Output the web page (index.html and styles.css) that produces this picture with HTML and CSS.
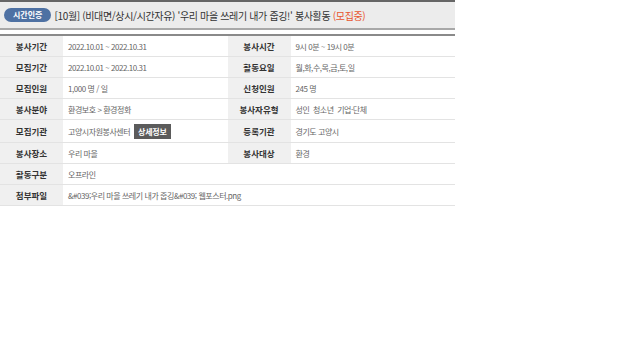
FILE: index.html
```html
<!DOCTYPE html>
<html lang="ko">
<head>
    <meta charset="UTF-8">
    <meta name="viewport" content="width=device-width, initial-scale=1.0">
    <title>봉사활동 상세</title>
    <link rel="stylesheet" href="styles.css">
</head>
<body>
    <div class="view">
        <div class="view-title">
            <span class="badge">시간인증</span>
            <h2>[10월] (비대면/상시/시간자유) '우리 마을 쓰레기 내가 줍깅!' 봉사활동 <em>(모집중)</em></h2>
        </div>

        <table class="info">
            <colgroup>
                <col class="col-th">
                <col class="col-td">
                <col class="col-th">
                <col class="col-td">
            </colgroup>
            <tr>
                <th>봉사기간</th>
                <td>2022.10.01 ~ 2022.10.31</td>
                <th>봉사시간</th>
                <td>9시 0분 ~ 19시 0분</td>
            </tr>
            <tr>
                <th>모집기간</th>
                <td>2022.10.01 ~ 2022.10.31</td>
                <th>활동요일</th>
                <td>월,화,수,목,금,토,일</td>
            </tr>
            <tr>
                <th>모집인원</th>
                <td>1,000 명 / 일</td>
                <th>신청인원</th>
                <td>245 명</td>
            </tr>
            <tr>
                <th>봉사분야</th>
                <td>환경보호 &gt; 환경정화</td>
                <th>봉사자유형</th>
                <td>성인&nbsp; 청소년&nbsp; 기업·단체</td>
            </tr>
            <tr class="tall">
                <th>모집기관</th>
                <td>고양시자원봉사센터 <a class="btn-info" href="#">상세정보</a></td>
                <th>등록기관</th>
                <td>경기도 고양시</td>
            </tr>
            <tr>
                <th>봉사장소</th>
                <td>우리 마을</td>
                <th>봉사대상</th>
                <td>환경</td>
            </tr>
            <tr>
                <th>활동구분</th>
                <td colspan="3">오프라인</td>
            </tr>
            <tr>
                <th>첨부파일</th>
                <td colspan="3">&amp;#039;우리 마을 쓰레기 내가 줍깅&amp;#039; 웹포스터.png</td>
            </tr>
        </table>
    </div>
</body>
</html>
```

FILE: styles.css
```css
body {
    margin: 0;
    font-family: "Noto Sans CJK KR", "Noto Sans", sans-serif;
    background-color: #fff;
    color: #333;
}

.view {
    width: 455px;
}

.view-title {
    display: flex;
    align-items: center;
    gap: 3px;
    height: 26px;
    padding: 0 4px;
    background-color: #ececec;
    border-top: 2px solid #666;
    border-bottom: 2px solid #a8a8a8;
}

.badge {
    display: inline-block;
    padding: 0 9px;
    height: 14px;
    line-height: 14px;
    border-radius: 7px;
    background-color: #4e71a3;
    color: #fff;
    font-size: 8px;
    font-weight: bold;
}

.view-title h2 {
    margin: 0;
    font-size: 10px;
    font-weight: normal;
    color: #333;
    letter-spacing: -0.35px;
}

.view-title em {
    font-style: normal;
    color: #e8552e;
}

.info {
    width: 100%;
    margin-top: 4px;
    border-collapse: collapse;
    table-layout: fixed;
    border-top: 2px solid #8a8a8a;
}

.col-th {
    width: 63px;
}

.info th,
.info td {
    height: 20px;
    padding: 0;
    border-bottom: 1px solid #e3e3e3;
    text-align: left;
}

.info th {
    background-color: #f0f0f0;
    color: #333;
    font-size: 8.5px;
    font-weight: bold;
    text-align: center;
}

.info td {
    padding-left: 5px;
    font-size: 8px;
    letter-spacing: -0.45px;
    color: #666;
}

.info tr.tall th,
.info tr.tall td {
    height: 22px;
}

.btn-info {
    display: inline-block;
    margin-left: 2px;
    padding: 0 4px;
    height: 15px;
    line-height: 15px;
    background-color: #5b5b5b;
    color: #fff;
    font-weight: bold;
    letter-spacing: -0.2px;
    text-decoration: none;
}
```
